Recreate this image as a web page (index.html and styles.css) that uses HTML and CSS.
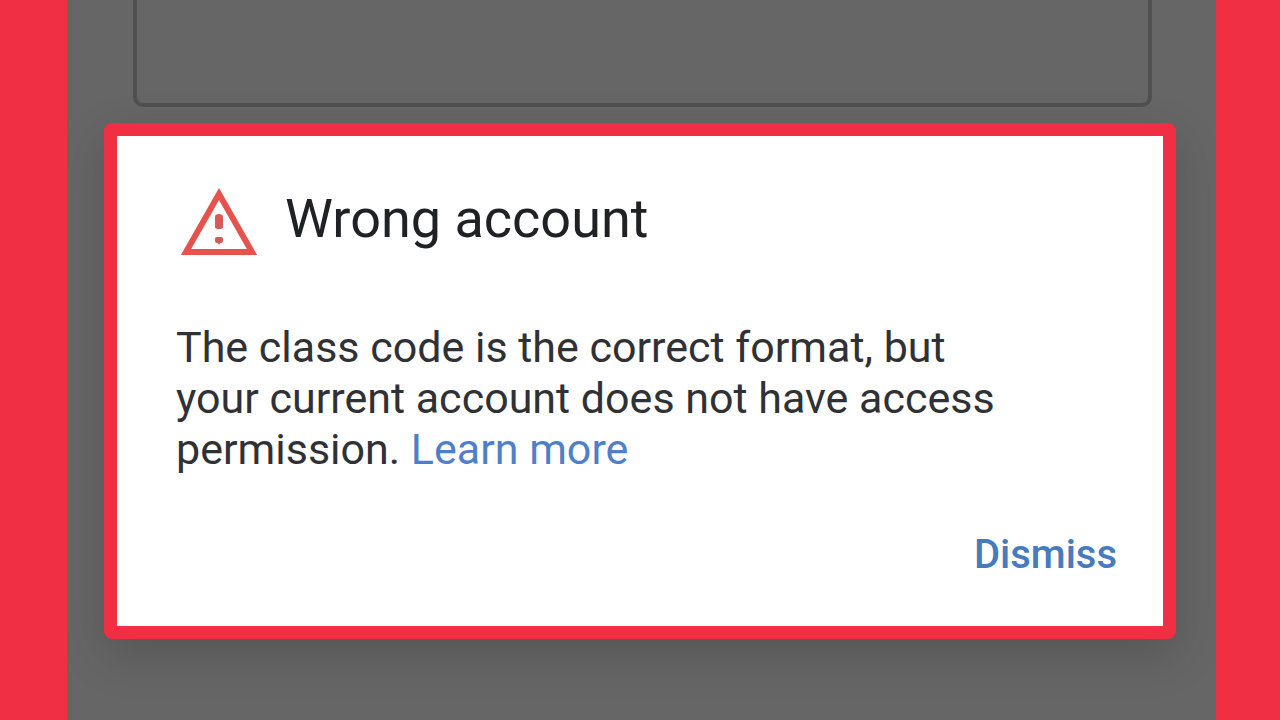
FILE: index.html
```html
<!DOCTYPE html>
<html lang="en">
<head>
    <meta charset="UTF-8">
    <meta name="viewport" content="width=device-width, initial-scale=1.0">
    <title>Wrong account</title>
    <link rel="stylesheet" href="styles.css">
</head>
<body>
    <main class="screen">
        <textarea class="code-field" aria-label="Class code" disabled></textarea>
        <section class="dialog" role="alertdialog" aria-labelledby="dialogTitle" aria-describedby="dialogText">
            <div class="dialog-header">
                <svg class="warning-icon" viewBox="0 0 84 76" aria-hidden="true">
                    <path class="warning-outline" d="M43 10 L76 68 H10 Z"/>
                    <path class="warning-mark" d="M39 33q0-3 4-3t4 3v10q0 2-4 2t-4-2z M39 54h8l-4 7z"/>
                    <rect class="warning-mark" x="39" y="53" width="8" height="6" rx="2"/>
                </svg>
                <h1 id="dialogTitle">Wrong account</h1>
            </div>
            <p class="dialog-text" id="dialogText">The class code is the correct format, but your current account does not have access permission. <a href="#">Learn more</a></p>
            <div class="dialog-actions">
                <button class="dismiss" type="button">Dismiss</button>
            </div>
        </section>
    </main>
</body>
</html>
```

FILE: styles.css
```css
* {
    box-sizing: border-box;
}
body {
    margin: 0;
    padding: 0 5%;
    background-color: #f02f42; /* Red side bands */
    font-family: Roboto, "Liberation Sans", sans-serif;
    color: #202124;
}
.screen {
    display: flex;
    flex-direction: column;
    min-height: 100vh;
    margin: 0 0 0 3px;
    padding: 0 40px 80px 37px;
    background-color: #666; /* Dimmed page behind the dialog */
    overflow: hidden;
}
.code-field {
    height: 107px;
    margin: 0 24px 16px 29px;
    border: 4px solid #505050;
    border-top: none;
    border-radius: 0 0 10px 10px;
    background-color: transparent;
    resize: none;
}
.dialog {
    display: flex;
    flex-direction: column;
    padding: 48px 46px 43px 59px;
    border: 13px solid #f02f42;
    border-radius: 8px;
    background-color: #fff;
    background-clip: padding-box;
    box-shadow: 0 16px 48px rgba(0, 0, 0, 0.16);
}
.dialog-header {
    display: flex;
    align-items: flex-start;
    gap: 25px;
}
.warning-icon {
    width: 84px;
    height: 76px;
}
.warning-outline {
    fill: none;
    stroke: #e5534c;
    stroke-width: 6;
}
.warning-mark {
    fill: #d65a58;
}
h1 {
    margin: 0;
    font-size: 54px;
    font-weight: 400;
    line-height: 70px;
}
.dialog-text {
    margin: 62px 0 0;
    max-width: 860px;
    font-size: 43px;
    line-height: 51px;
    color: #303134;
}
.dialog-text a {
    color: #4f7fcb;
    text-decoration: none;
}
.dialog-text a:hover {
    text-decoration: underline;
}
.dialog-actions {
    display: flex;
    justify-content: flex-end;
    margin-top: 52px;
}
.dismiss {
    padding: 0;
    border: none;
    background: none;
    font-family: inherit;
    font-size: 40px;
    font-weight: 500;
    line-height: 56px;
    color: #467bbd;
    cursor: pointer;
}
```
